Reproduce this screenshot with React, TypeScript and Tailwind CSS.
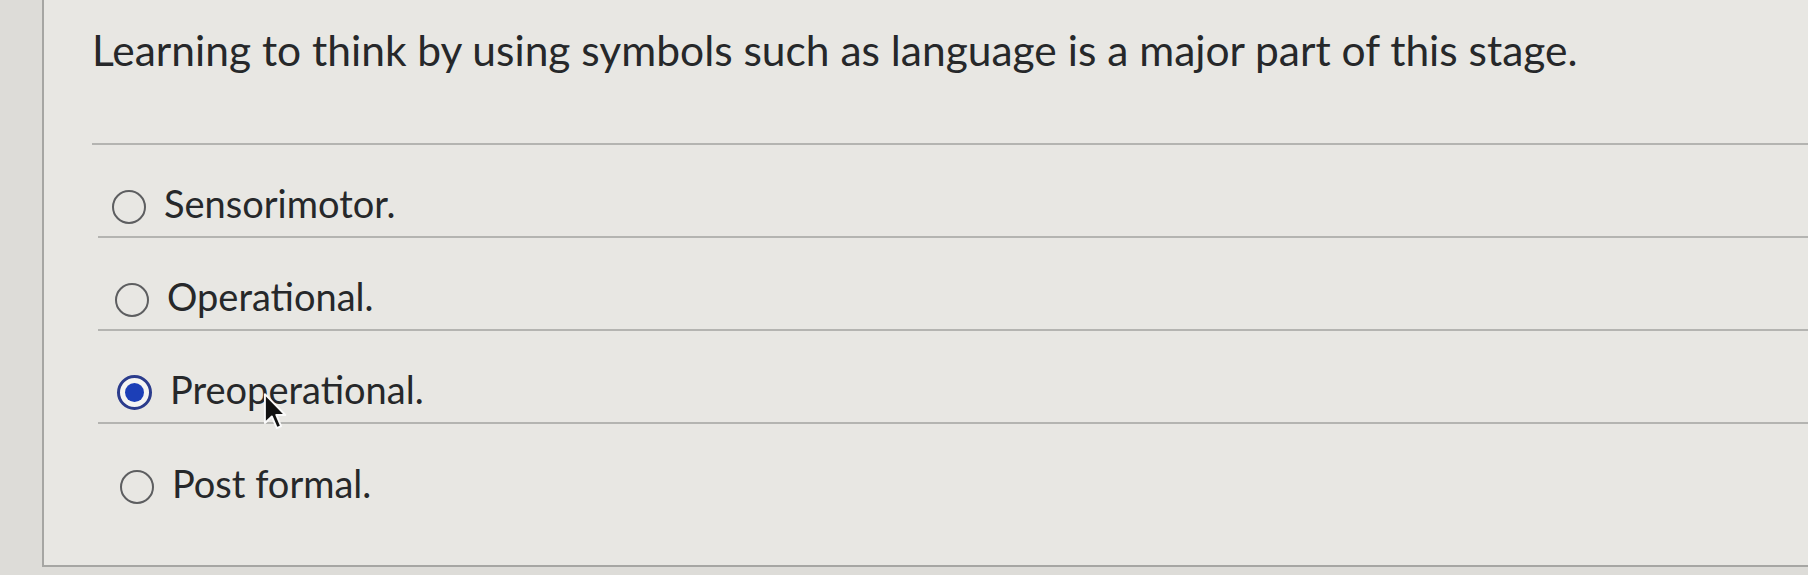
import { FC } from "react"

const options = [
  { label: "Sensorimotor.", selected: false, pad: "pl-[14px]" },
  { label: "Operational.", selected: false, pad: "pl-[17px]" },
  { label: "Preoperational.", selected: true, pad: "pl-[19px]" },
  { label: "Post formal.", selected: false, pad: "pl-[22px]" },
]

const Radio: FC<{ selected: boolean }> = ({ selected }) =>
  selected ? (
    <span className="flex h-[35px] w-[35px] shrink-0 items-center justify-center rounded-full border-[3px] border-[#2b3c8c] bg-[#f4f4f2]">
      <span className="h-[19px] w-[19px] rounded-full bg-[#1c3fb7]" />
    </span>
  ) : (
    <span className="h-[34px] w-[34px] shrink-0 rounded-full border-2 border-[#5d5e60]" />
  )

const Cursor: FC = () => (
  <svg
    className="absolute left-[263px] top-[392px]"
    width="25"
    height="39"
    viewBox="0 0 13 20"
  >
    <path
      d="M1 1 L1 16 L4.6 12.6 L7.2 18.6 L9.4 17.6 L6.9 11.8 L11.6 11.8 Z"
      fill="#111"
      stroke="#fafafa"
      strokeWidth="1"
      strokeLinejoin="round"
    />
  </svg>
)

const App: FC = () => {
  return (
    <div className="relative flex h-[575px] w-full overflow-hidden bg-[#dddcd8] font-['Lato',sans-serif] text-[#26282a]">
      <div className="w-[42px] shrink-0" />
      <div className="flex flex-1 flex-col">
        <div className="h-[567px] border-b-2 border-l-2 border-[#a6a6a3] bg-[#e8e7e3] pl-[48px]">
          <h1 className="pt-[29px] text-[42.5px] leading-[42px] font-normal">
            Learning to think by using symbols such as language is a major part of this stage.
          </h1>
          <div className="mt-[72px] h-[2px] bg-[#b4b4b1]" />
          <ul className="ml-[6px]">
            {options.map((o, i) => (
              <li
                key={o.label}
                className={`flex h-[93px] items-center gap-[18px] pt-[32px] ${o.pad} ${
                  i < options.length - 1 ? "border-b-2 border-[#b4b4b1]" : ""
                }`}
              >
                <Radio selected={o.selected} />
                <span className="relative -top-[4px] text-[38px] leading-[38px]">{o.label}</span>
              </li>
            ))}
          </ul>
        </div>
      </div>
      <Cursor />
    </div>
  )
}

export default App
